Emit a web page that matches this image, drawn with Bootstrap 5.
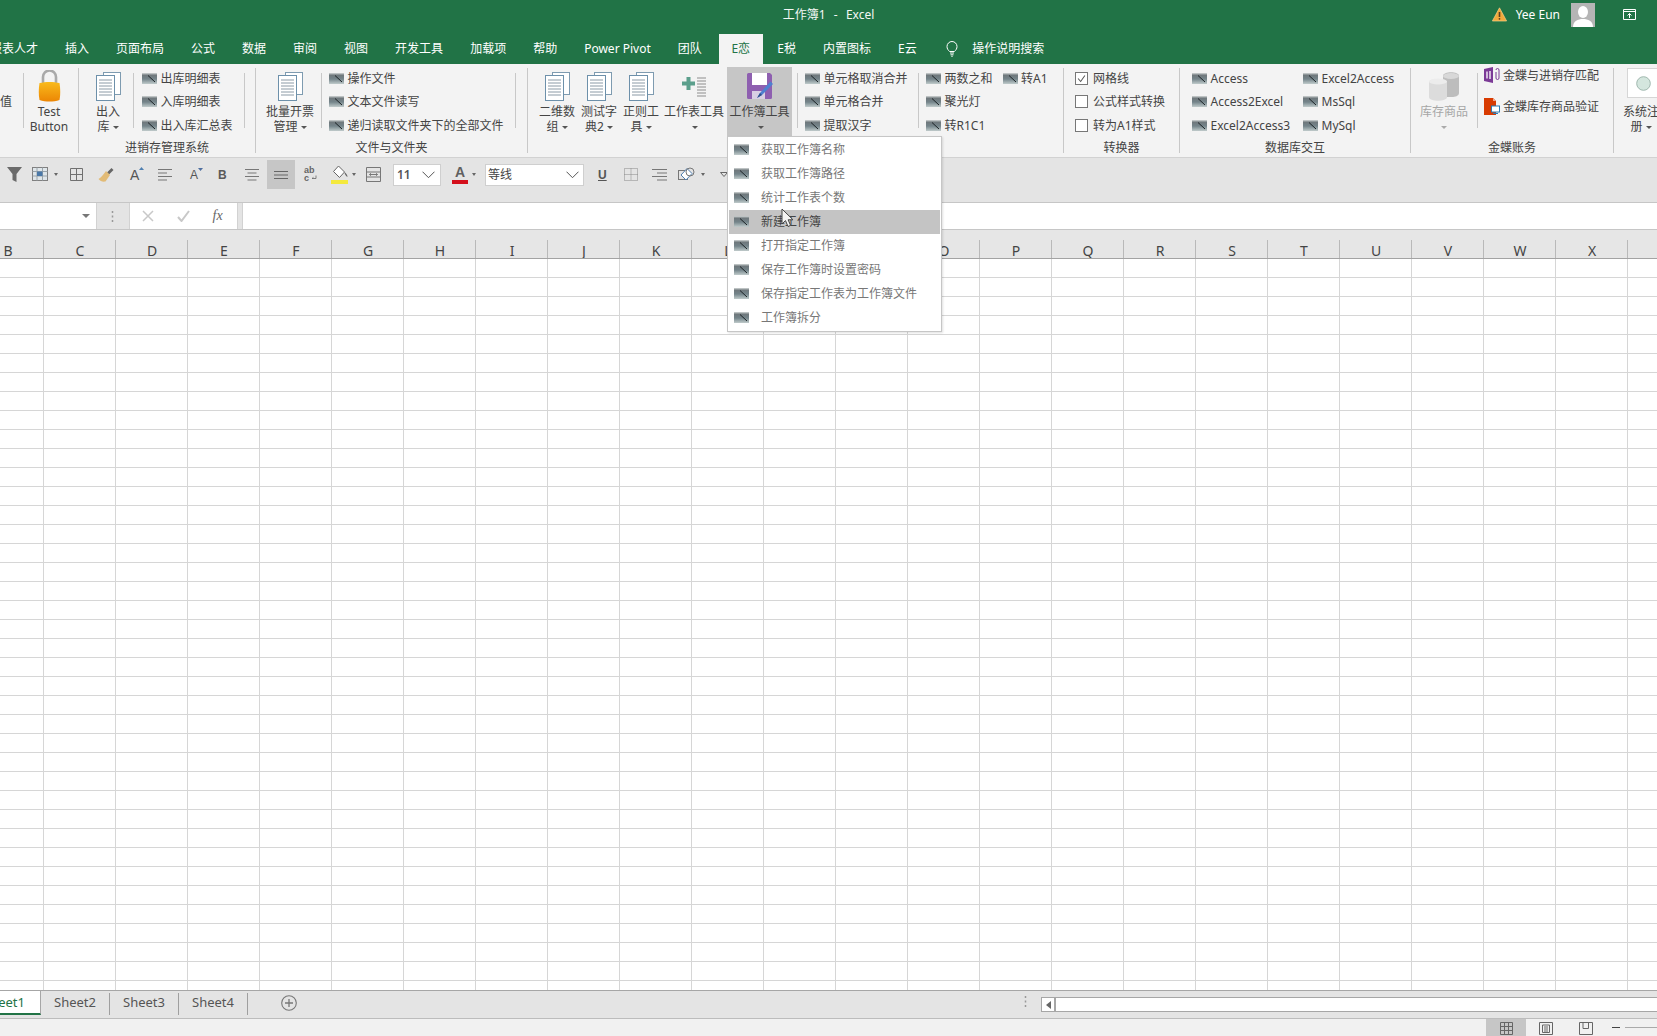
<!DOCTYPE html>
<html lang="zh-CN">
<head>
<meta charset="utf-8">
<title>工作簿1 - Excel</title>
<link rel="stylesheet" href="https://cdn.jsdelivr.net/npm/bootstrap@5.3.0/dist/css/bootstrap.min.css">
<style>
html,body{height:100%}
body{width:1657px;height:1036px;overflow:hidden;position:relative;font-family:"Noto Sans","Noto Sans CJK SC",sans-serif;font-size:12px;line-height:15px;color:#444;background:#fff}
svg{display:block;flex:none}
.xl-top{background:#217346;color:#fff}
.xl-title{height:34px;padding-bottom:5px}
.xl-side{flex:1 1 0}
.ttl{white-space:pre;opacity:.95;word-spacing:1px}
.warn{margin-right:9px}
.ava{margin:0 28px 0 11px}
.rst{margin-right:21px}
.xl-tabs{height:30px;margin-left:-23.5px}
.tabi{padding:7px 13.5px 0;white-space:nowrap}
.tabi.act{background:#f3f3f3;color:#217346;margin-left:3.5px;width:44px;padding:7px 0 0;text-align:center;flex:none}
.tabi.aft{padding-left:14.5px}
.tabi.bulb{padding:6px 14px 0 16px}
.tabi.srch{padding-left:0}
.rbn{height:94px;background:#f3f3f3;border-bottom:1px solid #d2d2d2;overflow:hidden}
.grp{height:93px;flex:none;display:flex;flex-direction:column}
.gsep{width:1px;height:85px;margin-top:4px;background:#c8c8c8;flex:none}
.g1{width:78px}.g2{width:176px}.g3{width:271px}.g4{width:535px}.g5{width:115px}.g6{width:230px}.g7{width:202px}.g8{width:50px}
.gbody{height:76px;display:flex;align-items:flex-start}
.glab{height:16px;line-height:16px;text-align:center;white-space:nowrap}
.isep{width:1px;height:55px;margin-top:9px;background:#c8c8c8;flex:none}
.bigb{height:72px;padding-top:8px;display:flex;flex-direction:column;align-items:center;text-align:center;flex:none;white-space:nowrap}
.bigb svg{margin-bottom:2.5px}
.bigb.hot{background:#c6c6c6;margin-top:3px;padding-top:5px;height:69px}
.bigb.hot svg{margin-bottom:4.5px}
.bigb .lockic{margin-top:-2px;margin-bottom:1.5px}
.dis{color:#a6a6a6}
.cdn{display:inline-block;width:0;height:0;border:3px solid transparent;border-top:3px solid #555;border-bottom:0;vertical-align:middle;margin-left:3px}
.dis .cdn{border-top-color:#aaa;margin-left:0}
.smc{padding-top:3px;flex:none}
.smr{height:23.25px;display:flex;align-items:center;white-space:nowrap}
.smr svg{margin-right:3.5px}
.val{width:23px;padding-top:30px;flex:none}
.b-test{width:50px}
.b-inout{width:40px;margin:0 5px 0 9px}
.c-inout{width:102px;margin-left:8px}
.b-bill{width:56px;margin:0 3px 0 6px}
.c-file{width:186px;margin-left:7px}
.b-2d{width:40px;margin-left:9px}
.b-dict{width:40px;margin-left:2px}
.b-reg{width:40px;margin-left:2px}
.b-sheet{width:64px;margin-left:1px}
.b-book{width:65px;margin:0 5px 0 1px}
.c-cell{width:113px;margin-left:7px}
.c-sum{margin-left:7px}
.smi2{margin-left:10px}
.c-chk{margin-left:11px}
.c-chk .smr{gap:5px}
.form-check-input.xchk{width:13px;height:13px;margin:0;border:1px solid #777;border-radius:0;background-color:#fff;flex:none}
.form-check-input.xchk:checked{background-color:#fff;border-color:#777;background-image:url("data:image/svg+xml,%3Csvg xmlns='http://www.w3.org/2000/svg' viewBox='0 0 13 13'%3E%3Cpath d='M2.5 6.5l3 3.5 5-7' fill='none' stroke='%23555' stroke-width='1.2'/%3E%3C/svg%3E");background-size:100% 100%}
.c-db1{width:111px;margin-left:12px}
.b-stock{width:50px;margin:0 8px 0 8px}
.c-kd{margin-left:6px;padding-top:3px;flex:none}
.kd{height:16px;display:flex;align-items:center;white-space:nowrap;gap:3px}
.kd+.kd{margin-top:15px}
.b-reg2{width:36px;margin-left:9px}
.regbox{width:32px;height:30px;background:#fff;border:1px solid #d6d6d6;display:flex;align-items:center;justify-content:center;margin:-4px 0 6px 4px;flex:none}
.regbox svg{margin:0}
.tbar{height:44px;background:#e4e4e4;padding-bottom:11px;white-space:nowrap}
.l3{margin-left:3px}.l4{margin-left:4px}.l6{margin-left:6px}.l7{margin-left:7px}.l8{margin-left:8px}.l9{margin-left:9px}.l10{margin-left:10px}.l11{margin-left:11px}.l12{margin-left:12px}.l13{margin-left:13px}.l14{margin-left:14px}.l15{margin-left:15px}.l16{margin-left:16px}.l17{margin-left:17px}.l18{margin-left:18px}
.tcar{width:0;height:0;border:2.5px solid transparent;border-top:3px solid #666;border-bottom:0;flex:none}
.namebox .tcar{border-width:4px 4px 0;border-top-color:#777}
.hbox{width:28px;height:29px;background:#c6c6c6;display:flex;align-items:center;justify-content:center;flex:none}
.combo{height:22px;background:#fff;border:1px solid #cfcfcf;display:flex;align-items:center;justify-content:space-between;padding:0 4px 0 2px;flex:none}
.cb-size{width:48px;padding:0 5px 0 3px;font-weight:600;color:#555}
.cb-font{width:99px}
.tba{display:flex;font-family:"Liberation Sans",sans-serif;color:#555;flex:none}
.tba-u{font-size:14px;line-height:16px;width:14px}
.tba-d{font-size:12px;line-height:14px;width:13px;margin-top:1px}
.tbb{font-family:"Liberation Sans",sans-serif;font-weight:700;font-size:12px;line-height:14px;width:9px;color:#5a5a5a;flex:none}
.tbu{font-family:"Liberation Sans",sans-serif;font-weight:700;font-size:12px;line-height:14px;width:10px;color:#555;text-decoration:underline;flex:none}
.tbw{display:grid;grid-template-columns:7px 6px;font-family:"Liberation Sans",sans-serif;font-weight:700;font-size:9px;line-height:7.5px;color:#666;flex:none;width:13px}
.tbw span:first-child{grid-column:1/3}
.tbr{width:16px;display:flex;flex-direction:column;align-items:center;font-family:"Liberation Sans",sans-serif;font-weight:700;font-size:14px;line-height:13px;color:#606060;flex:none}
.tbr i{display:block;width:16px;height:4px;background:#d40f1c;margin-top:1px}
.fbar{height:28px;background:#e4e4e4;border-top:1px solid #c6c6c6;border-bottom:1px solid #c6c6c6}
.fbar>*{flex:none}
.namebox{width:97px;background:#fff;height:100%;display:flex;align-items:center;justify-content:flex-end;padding-right:6px;border-right:1px solid #d2d2d2}
.fdots{width:31.5px;display:flex;justify-content:center}
.fbtns{width:109px;height:100%;background:#fff;border:solid #d2d2d2;border-width:0 1px;display:flex;align-items:center;font-family:"Liberation Serif",serif;font-style:italic;color:#666;font-size:14px}
.fbtns svg:first-child{margin-left:12px}
.fbtns svg:nth-child(2){margin-left:23px}
.fxt{margin-left:23px;line-height:14px}
.finput{flex:1 1 auto;height:100%;margin-left:4px;background:#fff;border-left:1px solid #d2d2d2}
.colh{height:29px;background:#e6e6e6;border-bottom:1px solid #a3a3a3;margin-left:-28px;width:1685px;overflow:hidden}
.colc{width:72px;height:28px;flex:none;text-align:center;padding-top:12px;line-height:18px;font-size:14px;color:#444;background:linear-gradient(#b9b9b9,#b9b9b9) right bottom/1px 18px no-repeat}
.sheet{height:731px;background-color:#fff;background-image:repeating-linear-gradient(90deg,transparent 0,transparent 71px,#d6d6d6 71px,#d6d6d6 72px),repeating-linear-gradient(180deg,transparent 0,transparent 18px,#d6d6d6 18px,#d6d6d6 19px);background-position:-28px 0,0 0}
.tabsb{height:29px;background:#e4e4e4;border-top:1px solid #a6a6a6;border-bottom:1px solid #bcbcbc;font-size:13px;color:#555}
.stab{height:22px;width:69px;margin-top:2px;text-align:center;line-height:18px;border-right:1px solid #9f9f9f;flex:none}
.stab.on{width:41px;height:24px;margin-top:0;background:#fff;border-right:1px solid #a6a6a6;border-bottom:2px solid #217346;color:#217346;line-height:22px;text-align:left;text-indent:-17px;overflow:hidden;white-space:nowrap}
.addb{margin:4px 0 0 33px}
.hdots{margin:5px 0 0 auto}
.hscr{width:616px;height:15px;margin:6px 0 0 14px;background:#fff;border:solid #a6a6a6;border-width:1px 0;display:flex}
.hbtn{width:15px;background:#fff;border:solid #a6a6a6;border-width:0 2px 0 1px;display:flex;align-items:center;justify-content:center;flex:none}
.stbar{height:17px;background:#f1f1f1;justify-content:flex-end}
.vbtn{width:40px;height:18px;display:flex;align-items:center;justify-content:center;flex:none}
.vbtn.on{background:#c6c6c6}
.zmin{width:8px;height:1px;background:#444;margin-left:6px;flex:none}
.zsl{width:32px;height:1px;background:#aaa;margin-left:5px;flex:none}
.dropdown-menu.xmenu{position:absolute;left:727px;top:136px;width:215px;height:196px;min-width:0;padding:1px 1px;margin:0;border:1px solid #c6c6c6;border-radius:0;background:#fff;font-size:12px;box-shadow:1px 1px 2px rgba(0,0,0,.12);z-index:10}
.xmenu .dropdown-item{height:24px;padding:0 0 2px 5px;display:flex;align-items:center;gap:12px;color:#777;font-size:12px;line-height:15px}
.xmenu .dropdown-item.hot{background:#c4c4c4;color:#444}
.cursor{position:absolute;left:781px;top:208px;z-index:11}
</style>
</head>
<body>
<svg width="0" height="0" class="position-absolute">
<defs>
<linearGradient id="env" x1="0" y1="0" x2="0" y2="1"><stop offset="0" stop-color="#d4d8d8"/><stop offset=".2" stop-color="#6f787c"/><stop offset=".55" stop-color="#74848a"/><stop offset="1" stop-color="#c0cbcb"/></linearGradient>
<linearGradient id="lockg" x1="0" y1="0" x2="0" y2="1"><stop offset="0" stop-color="#f9bb1c"/><stop offset="1" stop-color="#ec8604"/></linearGradient>
<symbol id="env1" viewBox="0 0 15 11"><rect y="0" width="15" height="11" fill="url(#env)"/><path d="M6 2.500L13 9" stroke="#1c2326" stroke-width="1"/></symbol>
<symbol id="doc" viewBox="0 0 25 29"><rect x="7.500" y=".5" width="17" height="22" fill="#fff" stroke="#7e9bb0"/><rect x=".5" y="3.500" width="18" height="25" fill="#fff" stroke="#6d90aa"/><path d="M3 8h13M3 11h13M3 14h13M3 17h13M3 20h13M3 23h13" stroke="#8b9aa6"/></symbol>
</defs>
</svg>

<div class="xl-top">
  <div class="xl-title d-flex align-items-center">
    <div class="xl-side"></div>
    <div class="ttl">工作簿1  -  Excel</div>
    <div class="xl-side d-flex align-items-center justify-content-end">
      <svg class="warn" width="15" height="15" viewBox="0 0 15 15"><path d="M7.500 .8L14.600 14H.4z" fill="#f2a93b" stroke="#f7d089" stroke-width=".7"/><path d="M7.500 5v5" stroke="#5a4020" stroke-width="1.600"/><circle cx="7.500" cy="11.800" r=".9" fill="#5a4020"/></svg>
      <span>Yee Eun</span>
      <svg class="ava" width="24" height="24" viewBox="0 0 24 24"><rect width="24" height="24" fill="#b5b5b5"/><ellipse cx="12" cy="9" rx="5" ry="6" fill="#fff"/><path d="M2 24c0-6 5-8 10-8s10 2 10 8z" fill="#fff"/></svg>
      <svg class="rst" width="13" height="11" viewBox="0 0 13 11"><path d="M.5.500h12v10H.5zM.5 2.500h12" fill="none" stroke="#fff"/><path d="M6.500 9V4.500M4.500 6.500l2-2 2 2" fill="none" stroke="#fff"/></svg>
    </div>
  </div>
  <div class="xl-tabs d-flex">
    <div class="tabi">报表人才</div><div class="tabi">插入</div><div class="tabi">页面布局</div><div class="tabi">公式</div><div class="tabi">数据</div><div class="tabi">审阅</div><div class="tabi">视图</div><div class="tabi">开发工具</div><div class="tabi">加载项</div><div class="tabi">帮助</div><div class="tabi">Power Pivot</div><div class="tabi">团队</div><div class="tabi act">E恋</div><div class="tabi aft">E税</div><div class="tabi">内置图标</div><div class="tabi">E云</div>
    <div class="tabi bulb"><svg width="12" height="17" viewBox="0 0 12 17"><path d="M3.600 11.500C2 10 1 8.700 1 6.500a5 5 0 0 1 10 0c0 2.200-1 3.500-2.600 5z" fill="none" stroke="#fff"/><path d="M4 13h4M4.500 14.800h3M5.300 16.300h1.400" stroke="#fff"/></svg></div>
    <div class="tabi srch">操作说明搜索</div>
  </div>
</div>

<div class="rbn d-flex">
  <!-- group 1 -->
  <div class="grp g1"><div class="gbody">
    <div class="val">值</div>
    <div class="isep"></div>
    <div class="bigb b-test"><svg class="lockic" width="23" height="32" viewBox="0 0 23 32"><path d="M5 15V7a6.500 6.500 0 0 1 13 0v8" fill="none" stroke="#a9a9a9" stroke-width="2.600"/><path d="M1.500 13c6-1.500 14-1.500 20 0 1 6 1 12 0 17-6 2-14 2-20 0-1-5-1-11 0-17z" fill="url(#lockg)"/></svg><div class="lb">Test<br>Button</div></div>
  </div><div class="glab"></div></div>
  <div class="gsep"></div>
  <!-- group 2 -->
  <div class="grp g2"><div class="gbody">
    <div class="bigb b-inout"><svg width="25" height="29"><use href="#doc"/></svg><div class="lb">出入<br>库<i class="cdn"></i></div></div>
    <div class="isep"></div>
    <div class="smc c-inout">
      <div class="smr"><svg width="15" height="11"><use href="#env1"/></svg>出库明细表</div>
      <div class="smr"><svg width="15" height="11"><use href="#env1"/></svg>入库明细表</div>
      <div class="smr"><svg width="15" height="11"><use href="#env1"/></svg>出入库汇总表</div>
    </div>
    <div class="isep"></div>
  </div><div class="glab">进销存管理系统</div></div>
  <div class="gsep"></div>
  <!-- group 3 -->
  <div class="grp g3"><div class="gbody">
    <div class="bigb b-bill"><svg width="25" height="29"><use href="#doc"/></svg><div class="lb">批量开票<br>管理<i class="cdn"></i></div></div>
    <div class="isep"></div>
    <div class="smc c-file">
      <div class="smr"><svg width="15" height="11"><use href="#env1"/></svg>操作文件</div>
      <div class="smr"><svg width="15" height="11"><use href="#env1"/></svg>文本文件读写</div>
      <div class="smr"><svg width="15" height="11"><use href="#env1"/></svg>递归读取文件夹下的全部文件</div>
    </div>
    <div class="isep"></div>
  </div><div class="glab">文件与文件夹</div></div>
  <div class="gsep"></div>
  <!-- group 4 -->
  <div class="grp g4"><div class="gbody">
    <div class="bigb b-2d"><svg width="25" height="29"><use href="#doc"/></svg><div class="lb">二维数<br>组<i class="cdn"></i></div></div>
    <div class="bigb b-dict"><svg width="25" height="29"><use href="#doc"/></svg><div class="lb">测试字<br>典2<i class="cdn"></i></div></div>
    <div class="bigb b-reg"><svg width="25" height="29"><use href="#doc"/></svg><div class="lb">正则工<br>具<i class="cdn"></i></div></div>
    <div class="bigb b-sheet"><svg width="24" height="29" viewBox="0 0 24 29"><path d="M0 11.500h13M6.500 5v13" stroke="#5b9f8c" stroke-width="4"/><path d="M15 6h9M15 9h9M15 12h9M15 15h9M15 18h9M15 21h9M15 24h9" stroke="#8d8d8d"/></svg><div class="lb">工作表工具<br><i class="cdn"></i></div></div>
    <div class="bigb b-book hot"><svg width="27" height="27" viewBox="0 0 27 27"><path d="M1 2.500A1.500 1.500 0 0 1 2.500 1H24l2 2v22.500a1.500 1.500 0 0 1-1.500 1.500h-22A1.500 1.500 0 0 1 1 25.500z" fill="#8e5fb0"/><rect x="6" y="1" width="15" height="12" fill="#fff"/><rect x="6" y="19" width="13" height="8" fill="#d9cfe3"/><path d="M11 26l3-5L24.500 9.500l2.500 2.500L16 23z" fill="#4f7fd0"/><path d="M11 26l3-5 2 2z" fill="#2f4f88"/></svg><div class="lb">工作簿工具<br><i class="cdn"></i></div></div>
    <div class="isep"></div>
    <div class="smc c-cell">
      <div class="smr"><svg width="15" height="11"><use href="#env1"/></svg>单元格取消合并</div>
      <div class="smr"><svg width="15" height="11"><use href="#env1"/></svg>单元格合并</div>
      <div class="smr"><svg width="15" height="11"><use href="#env1"/></svg>提取汉字</div>
    </div>
    <div class="isep"></div>
    <div class="smc c-sum">
      <div class="smr"><svg width="15" height="11"><use href="#env1"/></svg>两数之和<svg class="smi2" width="15" height="11"><use href="#env1"/></svg>转A1</div>
      <div class="smr"><svg width="15" height="11"><use href="#env1"/></svg>聚光灯</div>
      <div class="smr"><svg width="15" height="11"><use href="#env1"/></svg>转R1C1</div>
    </div>
  </div><div class="glab"></div></div>
  <div class="gsep"></div>
  <!-- group 5 -->
  <div class="grp g5"><div class="gbody">
    <div class="smc c-chk">
      <div class="smr"><input class="form-check-input xchk" type="checkbox" checked aria-label="网格线"><span>网格线</span></div>
      <div class="smr"><input class="form-check-input xchk" type="checkbox" aria-label="公式样式转换"><span>公式样式转换</span></div>
      <div class="smr"><input class="form-check-input xchk" type="checkbox" aria-label="转为A1样式"><span>转为A1样式</span></div>
    </div>
  </div><div class="glab">转换器</div></div>
  <div class="gsep"></div>
  <!-- group 6 -->
  <div class="grp g6"><div class="gbody">
    <div class="smc c-db1">
      <div class="smr"><svg width="15" height="11"><use href="#env1"/></svg>Access</div>
      <div class="smr"><svg width="15" height="11"><use href="#env1"/></svg>Access2Excel</div>
      <div class="smr"><svg width="15" height="11"><use href="#env1"/></svg>Excel2Access3</div>
    </div>
    <div class="smc">
      <div class="smr"><svg width="15" height="11"><use href="#env1"/></svg>Excel2Access</div>
      <div class="smr"><svg width="15" height="11"><use href="#env1"/></svg>MsSql</div>
      <div class="smr"><svg width="15" height="11"><use href="#env1"/></svg>MySql</div>
    </div>
  </div><div class="glab">数据库交互</div></div>
  <div class="gsep"></div>
  <!-- group 7 -->
  <div class="grp g7"><div class="gbody">
    <div class="bigb b-stock dis"><svg width="30" height="29" viewBox="0 0 30 29"><path d="M14 4c0-5 16-5 16 0v17c0 3-4 4-7 4H14z" fill="#bdbdbd"/><ellipse cx="22" cy="4" rx="8" ry="3" fill="#d8d8d8"/><path d="M0 10c0-4 18-4 18 0v15c0 5-18 5-18 0z" fill="#dcdcdc"/><ellipse cx="9" cy="9.500" rx="9" ry="3" fill="#ececec"/></svg><div class="lb">库存商品<br><i class="cdn"></i></div></div>
    <div class="isep"></div>
    <div class="c-kd">
      <div class="kd"><svg width="16" height="16" viewBox="0 0 16 16"><path d="M0 2l9-2v16l-9-2z" fill="#7b3a96"/><path d="M3 4.500v7M6 4v8" stroke="#fff" stroke-width="1.300"/><path d="M12 5v6a1.500 1.500 0 0 0 3 0V3a1.500 1.500 0 0 0-3 0" fill="none" stroke="#7b3a96"/></svg><span>金蝶与进销存匹配</span></div>
      <div class="kd"><svg width="16" height="17" viewBox="0 0 16 17"><path d="M0 0h9l3 3v14H0z" fill="#d83b01"/><path d="M9 0l3 3H9z" fill="#f3a58b"/><rect x="7.500" y="8" width="8" height="6" fill="#fff" stroke="#2b7cb5"/><path d="M9 15.500h5" stroke="#2b7cb5"/></svg><span>金蝶库存商品验证</span></div>
    </div>
  </div><div class="glab">金蝶账务</div></div>
  <div class="gsep"></div>
  <!-- group 8 -->
  <div class="grp g8"><div class="gbody">
    <div class="bigb b-reg2"><div class="regbox"><svg width="15" height="15" viewBox="0 0 15 15"><circle cx="7.500" cy="7.500" r="6.800" fill="#d4e6de" stroke="#9fb7ae"/></svg></div><div class="lb">系统注<br>册<i class="cdn"></i></div></div>
  </div><div class="glab"></div></div>
</div>

<div class="tbar d-flex align-items-center">
  <svg class="l7" width="15" height="15" viewBox="0 0 15 15"><path d="M0 0h15L9.500 7v8l-4-2V7z" fill="#6a6a6a"/></svg>
  <svg class="l10" width="16" height="15" viewBox="0 0 16 15"><rect x=".5" y=".5" width="15" height="13" fill="#dfe6ea" stroke="#808080"/><path d="M.5 4.500h15M.5 9h15M5 .5v13M10.500 .5v13" stroke="#9aa4aa"/><rect x="5" y="4.500" width="5.500" height="4.500" fill="#4a78a8"/></svg>
  <i class="tcar l6"></i>
  <svg class="l12" width="13" height="13" viewBox="0 0 13 13"><path d="M.5.500h12v12H.5zM6.500.5v12M.5 6.500h12" fill="none" stroke="#707070"/></svg>
  <svg class="l15" width="16" height="15" viewBox="0 0 16 15"><path d="M9 5.500L13.500 1 15.500 3 11 7.500z" fill="#666"/><path d="M8 4l4 4-4.500 6.500C4.500 15 2 14 .5 12 3 10.500 5 8 8 4z" fill="#e2bb76"/></svg>
  <span class="tba tba-u l16">A<svg width="5" height="3" viewBox="0 0 5 3"><path d="M0 3L2.500 0 5 3z" fill="#4f7fb0"/></svg></span>
  <svg class="l14" width="14" height="12" viewBox="0 0 14 12"><path d="M0 .5h14M0 4h9M0 7.500h14M0 11h9" stroke="#777"/></svg>
  <span class="tba tba-d l18">A<svg width="5" height="3" viewBox="0 0 5 3"><path d="M0 0h5L2.500 3z" fill="#4f6fa0"/></svg></span>
  <span class="tbb l15">B</span>
  <svg class="l18" width="14" height="12" viewBox="0 0 14 12"><path d="M0 .5h14M2.500 4h9M0 7.500h14M2.500 11h9" stroke="#777"/></svg>
  <div class="hbox l8"><svg width="14" height="8" viewBox="0 0 14 8"><path d="M0 .5h14M0 4h14M0 7.500h14" stroke="#666"/></svg></div>
  <span class="tbw l9"><span>ab</span><span>c</span><svg width="6" height="6" viewBox="0 0 6 6"><path d="M5 .5v3H1l1.500-1.200" fill="none" stroke="#666" stroke-width=".8"/></svg></span>
  <svg class="l14" width="18" height="19" viewBox="0 0 18 19"><path d="M7.500 1l6 6-5 5.500-6-6z" fill="#fff" stroke="#666"/><path d="M13.500 7c2 1.500 3 3.500 3 5-1.500-1-3-2.500-3-5" fill="#666"/><rect x="0" y="15" width="17" height="4" fill="#f4e93d"/></svg>
  <i class="tcar l3"></i>
  <svg class="l10" width="15" height="15" viewBox="0 0 15 15"><path d="M.5.500h14v14H.5zM.5 5h14M.5 10h14M3.500 7.500h8M3.500 7.500l1.500-1.200M3.500 7.500l1.500 1.200M11.500 7.500l-1.500-1.200M11.500 7.500l-1.500 1.200" fill="none" stroke="#777"/></svg>
  <div class="combo cb-size l12"><span>11</span><svg width="13" height="8" viewBox="0 0 13 8"><path d="M.5.700l6 6 6-6" fill="none" stroke="#555"/></svg></div>
  <span class="tbr l11">A<i></i></span>
  <i class="tcar l4"></i>
  <div class="combo cb-font l9"><span>等线</span><svg width="13" height="8" viewBox="0 0 13 8"><path d="M.5.700l6 6 6-6" fill="none" stroke="#555"/></svg></div>
  <span class="tbu l14">U</span>
  <svg class="l16" width="14" height="13" viewBox="0 0 14 13"><path d="M.5.500h13v12H.5zM.5 6.500h13M7 .5v12" fill="none" stroke="#888" stroke-dasharray="1 1"/></svg>
  <svg class="l14" width="15" height="12" viewBox="0 0 15 12"><path d="M0 .5h15M5 4h10M0 7.500h15M5 11h10" stroke="#777"/></svg>
  <svg class="l11" width="17" height="16" viewBox="0 0 17 16"><rect x=".5" y="3.500" width="9" height="9" fill="none" stroke="#777"/><path d="M9 1.500l5 5-6 6.500-5-5z" fill="#fff" stroke="#4f7fb0"/><circle cx="12" cy="5" r="4" fill="none" stroke="#777"/></svg>
  <i class="tcar l6"></i>
  <svg class="l15" width="8" height="5" viewBox="0 0 8 5"><path d="M.5.500h7L4 4.500z" fill="none" stroke="#666"/></svg>
</div>

<div class="fbar d-flex align-items-center">
  <div class="namebox"><i class="tcar"></i></div>
  <div class="fdots"><svg width="3" height="11" viewBox="0 0 3 11"><path d="M1.500 0v2M1.500 4.500v2M1.500 9v2" stroke="#999" stroke-width="1.500"/></svg></div>
  <div class="fbtns">
    <svg width="12" height="12" viewBox="0 0 12 12"><path d="M1 1l10 10M11 1L1 11" stroke="#c8c8c8" stroke-width="1.500"/></svg>
    <svg width="13" height="12" viewBox="0 0 13 12"><path d="M1 7l3.500 4L12 1" fill="none" stroke="#c8c8c8" stroke-width="2"/></svg>
    <span class="fxt">fx</span>
  </div>
  <div class="finput"></div>
</div>

<div class="colh d-flex">
  <div class="colc">B</div><div class="colc">C</div><div class="colc">D</div><div class="colc">E</div><div class="colc">F</div><div class="colc">G</div><div class="colc">H</div><div class="colc">I</div><div class="colc">J</div><div class="colc">K</div><div class="colc">L</div><div class="colc"></div><div class="colc"></div><div class="colc">O</div><div class="colc">P</div><div class="colc">Q</div><div class="colc">R</div><div class="colc">S</div><div class="colc">T</div><div class="colc">U</div><div class="colc">V</div><div class="colc">W</div><div class="colc">X</div><div class="colc"></div>
</div>

<div class="sheet"></div>

<div class="tabsb d-flex">
  <div class="stab on">Sheet1</div>
  <div class="stab">Sheet2</div>
  <div class="stab">Sheet3</div>
  <div class="stab">Sheet4</div>
  <svg class="addb" width="16" height="16" viewBox="0 0 16 16"><circle cx="8" cy="8" r="7.300" fill="none" stroke="#777" stroke-width="1.100"/><path d="M8 4v8M4 8h8" stroke="#777" stroke-width="1.300"/></svg>
  <svg class="hdots" width="3" height="11" viewBox="0 0 3 11"><path d="M1.500 0v2M1.500 4.500v2M1.500 9v2" stroke="#999" stroke-width="1.500"/></svg>
  <div class="hscr"><div class="hbtn"><svg width="5" height="8" viewBox="0 0 5 8"><path d="M5 0v8L0 4z" fill="#666"/></svg></div></div>
</div>

<div class="stbar d-flex">
  <div class="vbtn on"><svg width="13" height="13" viewBox="0 0 13 13"><path d="M.5.500h12v12H.5zM4.500.500v12M8.500.500v12M.5 4.500h12M.5 8.500h12" fill="none" stroke="#666"/></svg></div>
  <div class="vbtn"><svg width="14" height="13" viewBox="0 0 14 13"><path d="M.5.500h13v12H.5zM3.500 3h7v7.500h-7zM5 5h4M5 7h4M5 9h4" fill="none" stroke="#666"/></svg></div>
  <div class="vbtn"><svg width="14" height="13" viewBox="0 0 14 13"><path d="M.5.500h13v12H.5zM4 .5v6h5.500v-6" fill="none" stroke="#666"/></svg></div>
  <div class="zmin align-self-center"></div>
  <div class="zsl align-self-center"></div>
</div>

<div class="dropdown-menu show xmenu">
  <a class="dropdown-item" href="#"><svg width="15" height="11"><use href="#env1"/></svg>获取工作簿名称</a>
  <a class="dropdown-item" href="#"><svg width="15" height="11"><use href="#env1"/></svg>获取工作簿路径</a>
  <a class="dropdown-item" href="#"><svg width="15" height="11"><use href="#env1"/></svg>统计工作表个数</a>
  <a class="dropdown-item hot" href="#"><svg width="15" height="11"><use href="#env1"/></svg>新建工作簿</a>
  <a class="dropdown-item" href="#"><svg width="15" height="11"><use href="#env1"/></svg>打开指定工作簿</a>
  <a class="dropdown-item" href="#"><svg width="15" height="11"><use href="#env1"/></svg>保存工作簿时设置密码</a>
  <a class="dropdown-item" href="#"><svg width="15" height="11"><use href="#env1"/></svg>保存指定工作表为工作簿文件</a>
  <a class="dropdown-item" href="#"><svg width="15" height="11"><use href="#env1"/></svg>工作簿拆分</a>
</div>
<svg class="cursor" width="13" height="20" viewBox="0 0 13 20"><path d="M1 1v15l3.500-3.400L7 18.500l2.600-1.100-2.500-5.600H12z" fill="#f4f4f4" stroke="#444" stroke-width="1"/></svg>

<script src="https://cdn.jsdelivr.net/npm/bootstrap@5.3.0/dist/js/bootstrap.bundle.min.js"></script>
</body>
</html>
